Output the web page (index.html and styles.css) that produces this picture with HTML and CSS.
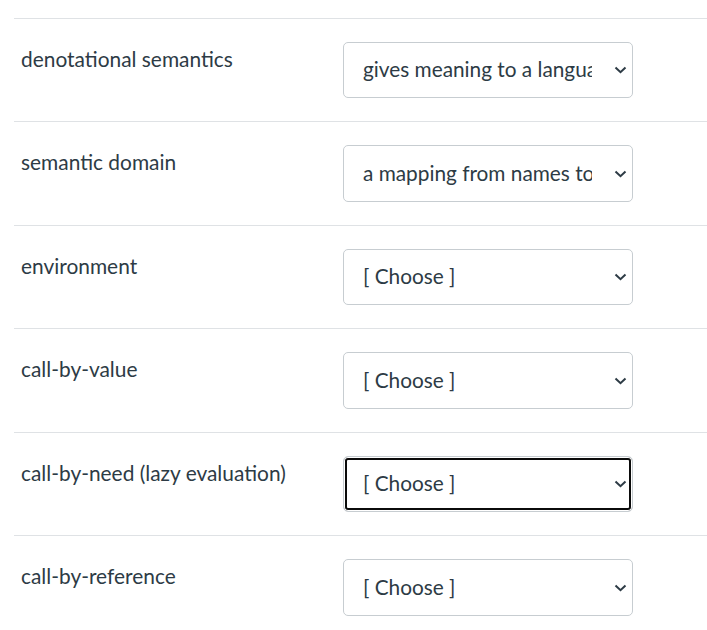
FILE: index.html
```html
<!DOCTYPE html>
<html>
<head>
<meta charset="utf-8">
<link rel="stylesheet" href="styles.css">
</head>
<body>
<div class="quiz">
  <div class="row">
    <div class="label">denotational semantics</div>
    <div class="select"><span class="value">gives meaning to a language by mapping programs to mathematical objects</span><svg class="chev" viewBox="0 0 13 8"><path d="M1.5 1.5 L6.5 6.2 L11.5 1.5" fill="none" stroke="#2d3b45" stroke-width="2"/></svg></div>
  </div>
  <div class="row">
    <div class="label">semantic domain</div>
    <div class="select"><span class="value">a mapping from names to values</span><svg class="chev" viewBox="0 0 13 8"><path d="M1.5 1.5 L6.5 6.2 L11.5 1.5" fill="none" stroke="#2d3b45" stroke-width="2"/></svg></div>
  </div>
  <div class="row">
    <div class="label">environment</div>
    <div class="select"><span class="value">[ Choose ]</span><svg class="chev" viewBox="0 0 13 8"><path d="M1.5 1.5 L6.5 6.2 L11.5 1.5" fill="none" stroke="#2d3b45" stroke-width="2"/></svg></div>
  </div>
  <div class="row">
    <div class="label">call-by-value</div>
    <div class="select"><span class="value">[ Choose ]</span><svg class="chev" viewBox="0 0 13 8"><path d="M1.5 1.5 L6.5 6.2 L11.5 1.5" fill="none" stroke="#2d3b45" stroke-width="2"/></svg></div>
  </div>
  <div class="row">
    <div class="label">call-by-need (lazy evaluation)</div>
    <div class="select focused"><span class="value">[ Choose ]</span><svg class="chev" viewBox="0 0 13 8"><path d="M1.5 1.5 L6.5 6.2 L11.5 1.5" fill="none" stroke="#2d3b45" stroke-width="2"/></svg></div>
  </div>
  <div class="row">
    <div class="label">call-by-reference</div>
    <div class="select"><span class="value">[ Choose ]</span><svg class="chev" viewBox="0 0 13 8"><path d="M1.5 1.5 L6.5 6.2 L11.5 1.5" fill="none" stroke="#2d3b45" stroke-width="2"/></svg></div>
  </div>
</div>
</body>
</html>
```

FILE: styles.css
```css
html, body {
  margin: 0;
  padding: 0;
  background: #ffffff;
}

body {
  font-family: Lato, "Open Sans", sans-serif;
  color: #2d3b45;
}

.quiz {
  padding: 17.5px 0 0 14px;
}

.row {
  display: flex;
  align-items: flex-start;
  border-top: 1px solid #dfe2e5;
  padding: 23px 0 23px 0;
}

.label {
  width: 322px;
  padding-left: 7px;
  padding-top: 4px;
  font-size: 20.9px;
  line-height: 26px;
}

.select {
  box-sizing: border-box;
  width: 290px;
  height: 56.5px;
  border: 1px solid #c7cdd1;
  border-radius: 5px;
  display: flex;
  align-items: center;
  padding: 0 0 1px 19px;
  background: #fff;
}

.select.focused {
  box-shadow: inset 0 0 0 1px #ffffff, inset 0 0 0 3px #0b0b0b;
}

.value {
  flex: 1;
  min-width: 0;
  overflow: hidden;
  white-space: nowrap;
  font-size: 20.8px;
  line-height: 26px;
}

.chev {
  width: 13px;
  height: 8px;
  margin: 2px 5px 0 22px;
  flex: none;
}
```
